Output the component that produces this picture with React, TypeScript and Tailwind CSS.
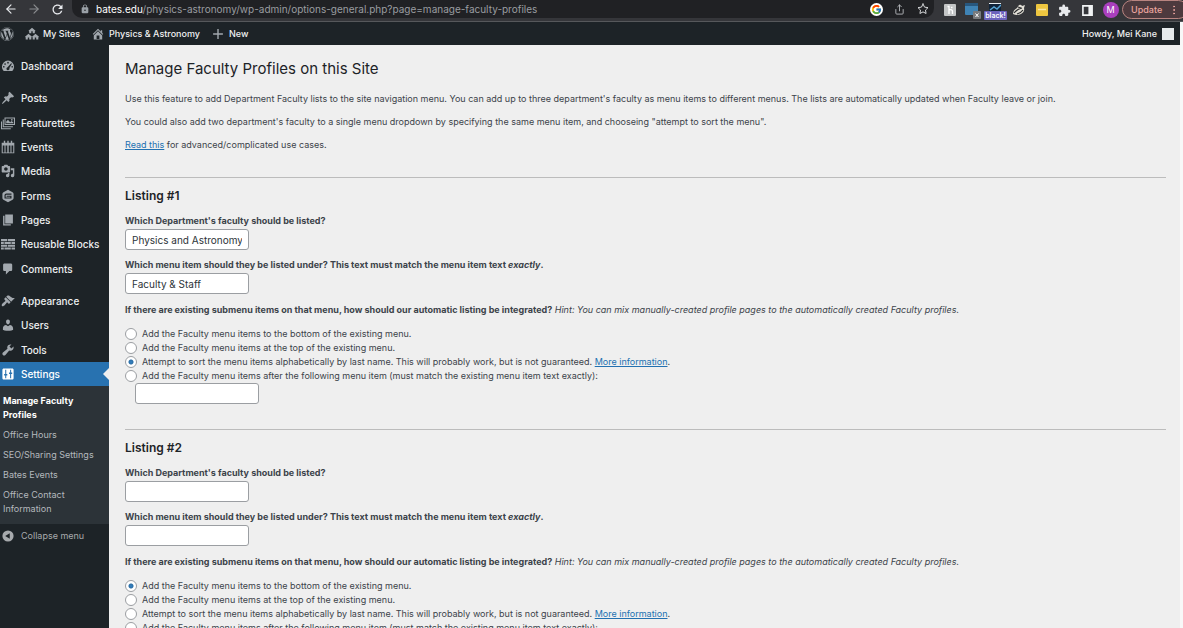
import { ReactNode } from 'react'
import {
  FiArrowLeft,
  FiArrowRight,
  FiMoreVertical,
  FiShare,
  FiStar,
} from 'react-icons/fi'
import { FcGoogle } from 'react-icons/fc'
import { FaWordpress } from 'react-icons/fa'
import { MdExtension, MdLock, MdRefresh } from 'react-icons/md'

type MenuItemType = {
  label: string
  icon: ReactNode
  active?: boolean
}

type ListingProps = {
  num: number
  department?: string
  menuItem?: string
  selected: number
}

const Icon = ({ children }: { children: ReactNode }) => (
  <svg viewBox="0 0 20 20" className="size-[14px] shrink-0" fill="currentColor" aria-hidden="true">
    {children}
  </svg>
)

const icons = {
  dashboard: (
    <Icon>
      <path
        fillRule="evenodd"
        d="M3.8 17h12.4A8.6 8.6 0 0 0 18.7 11 8.7 8.7 0 0 0 1.3 11a8.6 8.6 0 0 0 2.5 6zM10 4a1.2 1.2 0 1 1 0 2.4A1.2 1.2 0 0 1 10 4zM5.8 5.9a1.2 1.2 0 1 1 0 2.4 1.2 1.2 0 0 1 0-2.4zM14.6 6l1 .7-3.6 6.2a2.2 2.2 0 1 1-2.6-1.2zM4 9.9a1.2 1.2 0 1 1 0 2.4 1.2 1.2 0 0 1 0-2.4zm12 0a1.2 1.2 0 1 1 0 2.4 1.2 1.2 0 0 1 0-2.4z"
      />
    </Icon>
  ),
  posts: (
    <Icon>
      <path d="M10.44 3.02l1.82-1.82 6.36 6.35-1.83 1.82c-1.05-.68-2.48-.57-3.41.36l-.75.75c-.92.93-1.04 2.35-.35 3.41l-1.83 1.82-2.41-2.41-2.8 2.79c-.42.42-3.38 2.71-3.8 2.29s1.86-3.39 2.28-3.81l2.79-2.79L4.1 9.36l1.83-1.82c1.05.69 2.48.57 3.4-.36l.75-.75c.93-.92 1.05-2.35.36-3.41z" />
    </Icon>
  ),
  featurettes: (
    <Icon>
      <path fillRule="evenodd" d="M5 2h15v11H5zm1.5 1.5v8h12v-8z" />
      <path d="M7.5 10.500V8l2.500-2.500L13 9l2-2 2.500 2v1.500zM15.500 4.300a1.200 1.200 0 1 1 0 2.400 1.200 1.200 0 0 1 0-2.400z" />
      <path d="M2.500 5H4v9.500h13V16H2.500zM0 8h1.500v9.500H14V19H0z" />
    </Icon>
  ),
  events: (
    <Icon>
      <path
        fillRule="evenodd"
        d="M4 1h2v3h3V1h2v3h3V1h2v3h3v15H1V4h3zM2.500 8v10H5V8zm4 0v10H9V8zm4.500 0v10h2.500V8zm4 0v10h2.500V8z"
      />
    </Icon>
  ),
  media: (
    <Icon>
      <path
        fillRule="evenodd"
        d="M13 11V4c0-.55-.45-1-1-1h-1.670L9 1H5L3.670 3H2c-.55 0-1 .45-1 1v7c0 .55.45 1 1 1h10c.55 0 1-.45 1-1zM7 4.500c1.380 0 2.500 1.120 2.500 2.500S8.380 9.500 7 9.500 4.500 8.380 4.500 7 5.620 4.500 7 4.500zM14 6h5v10.500a2.500 2.500 0 1 1-2-2.450V9h-3zM10 13h2v3.500a2.500 2.500 0 1 1-2-2.450z"
      />
    </Icon>
  ),
  forms: (
    <Icon>
      <path
        fillRule="evenodd"
        d="M10 1l6.500 3.500Q18 5.300 18 7v6q0 1.700-1.500 2.500L10 19l-6.500-3.500Q2 14.700 2 13V7q0-1.700 1.500-2.500zM7.500 6.500Q5 6.500 5 9v4.500h10V9.500H8v1.500h5.200v1H6.700V9q0-.8.800-.8H15V6.500z"
      />
    </Icon>
  ),
  pages: (
    <Icon>
      <path d="M6 15V2h11v13H6zm-1 1h9v2H3V4h2v12z" />
    </Icon>
  ),
  blocks: (
    <Icon>
      <path d="M0 3h9v3H0zm10 0h10v3H10zM0 7h4v3H0zm5 0h9v3H5zm10 0h5v3h-5zM0 11h9v3H0zm10 0h10v3H10zM0 15h4v3H0zm5 0h9v3H5zm10 0h5v3h-5z" />
    </Icon>
  ),
  comments: (
    <Icon>
      <path d="M5 2h9c1.100 0 2 .9 2 2v7c0 1.100-.9 2-2 2h-2l-5 5v-5H5c-1.100 0-2-.9-2-2V4c0-1.100.9-2 2-2z" />
    </Icon>
  ),
  appearance: (
    <Icon>
      <path d="M14.480 11.060L7.410 3.990l1.500-1.500c.5-.56 2.300-.47 3.510.32 1.210.8 1.430 1.280 2.910 2.100 1.180.64 2.450 1.260 4.450.850zm-.71.71L6.700 4.700 4.930 6.470c-.39.39-.39 1.020 0 1.410l1.060 1.060c.39.390.39 1.030 0 1.420-.6.600-1.430 1.110-2.210 1.690-.35.26-.7.530-1.010.840C1.430 14.230.4 16.080 1.400 17.070c.99 1 2.840-.03 4.180-1.360.31-.31.580-.66.850-1.020.570-.78 1.080-1.610 1.690-2.210.39-.39 1.020-.39 1.410 0l1.060 1.060c.39.390 1.020.39 1.410 0z" />
    </Icon>
  ),
  users: (
    <Icon>
      <path d="M10 9.250c-2.270 0-2.730-3.440-2.730-3.440C7 4.020 7.820 2 9.970 2c2.160 0 2.980 2.020 2.710 3.810 0 0-.41 3.440-2.680 3.440zm0 2.570L12.720 10c2.390 0 4.520 2.330 4.520 4.530v2.490s-3.650 1.130-7.240 1.130c-3.650 0-7.240-1.130-7.240-1.130v-2.490c0-2.250 1.940-4.480 4.470-4.480z" />
    </Icon>
  ),
  tools: (
    <Icon>
      <path d="M16.680 9.770c-1.340 1.340-3.300 1.670-4.950.990l-5.410 6.520c-.99.990-2.590.990-3.580 0s-.99-2.590 0-3.570l6.520-5.420c-.68-1.650-.35-3.610.990-4.950 1.280-1.280 3.120-1.620 4.720-1.060l-2.890 2.890 2.820 2.820 2.860-2.870c.53 1.580.180 3.390-1.080 4.650z" />
    </Icon>
  ),
  settings: (
    <Icon>
      <path
        fillRule="evenodd"
        d="M18 16V4c0-1.100-.9-2-2-2H4c-1.100 0-2 .9-2 2v12c0 1.100.9 2 2 2h12c1.100 0 2-.9 2-2zM6 4h1.500v6H9v2H7.500v4H6v-4H4.500v-2H6zm7 0h1.500v4H16v2h-1.500v6H13v-6h-1.500V8H13z"
      />
    </Icon>
  ),
  collapse: (
    <Icon>
      <path
        fillRule="evenodd"
        d="M10 2a8 8 0 1 1 0 16 8 8 0 0 1 0-16zm2.500 4L6 10l6.500 4z"
      />
    </Icon>
  ),
  sites: (
    <Icon>
      <path d="M10 1l5 4.500-1 1V9h-3V6H9v3H6V6.500l-1-1zM5 9.500L10 14l-1 1v3H6v-3H4v3H1v-3l-1-1zM15 9.500l5 4.500-1 1v3h-3v-3h-2v3h-3v-3l-1-1z" />
    </Icon>
  ),
  home: (
    <Icon>
      <path d="M16 8.500l1.530 1.530-1.060 1.060L10 4.600l-6.470 6.500-1.060-1.070L10 2.500l4 4v-2h2v4zm-6-2.460l6 5.990V18H4v-5.970zM12 17v-5H8v5h4z" fillRule="evenodd" />
    </Icon>
  ),
  plus: (
    <Icon>
      <path d="M17 9v2h-6v6H9v-6H3V9h6V3h2v6z" />
    </Icon>
  ),
}

const contentMenu: MenuItemType[] = [
  { label: 'Posts', icon: icons.posts },
  { label: 'Featurettes', icon: icons.featurettes },
  { label: 'Events', icon: icons.events },
  { label: 'Media', icon: icons.media },
  { label: 'Forms', icon: icons.forms },
  { label: 'Pages', icon: icons.pages },
  { label: 'Reusable Blocks', icon: icons.blocks },
  { label: 'Comments', icon: icons.comments },
]

const adminMenu: MenuItemType[] = [
  { label: 'Appearance', icon: icons.appearance },
  { label: 'Users', icon: icons.users },
  { label: 'Tools', icon: icons.tools },
  { label: 'Settings', icon: icons.settings, active: true },
]

const submenu = ['Office Hours', 'SEO/Sharing Settings', 'Bates Events', 'Office Contact Information']

const MenuItem = ({ label, icon, active }: MenuItemType) => (
  <a
    href="#"
    className={`relative flex min-h-6 items-center gap-[6px] pl-px text-[10px] leading-4 font-medium whitespace-nowrap ${
      active ? 'bg-[#2872b0] text-white' : 'text-[#eef0f1]'
    }`}
  >
    <span className={active ? 'text-white' : 'text-[#a2a8ae]'}>{icon}</span>
    {label}
    {active && (
      <span className="absolute top-1/2 right-0 -translate-y-1/2 border-y-[6px] border-r-[6px] border-y-transparent border-r-[#efefef]" />
    )}
  </a>
)

const BrowserBar = () => (
  <div className="flex h-[22px] shrink-0 items-start overflow-hidden border-b border-[#56585b] bg-[#35363a] text-[#e8eaed]">
    <div className="flex h-[18px] w-[72px] items-center gap-[9px] pl-1">
      <button aria-label="Back">
        <FiArrowLeft size={14} />
      </button>
      <button aria-label="Forward" className="text-[#8a8c8f]">
        <FiArrowRight size={14} />
      </button>
      <button aria-label="Reload">
        <MdRefresh size={15} />
      </button>
    </div>
    <div className="flex h-[18px] flex-1 items-center rounded-b-[10px] bg-[#202124] pl-2">
      <MdLock size={10} className="text-[#9aa0a6]" />
      <p className="ml-[6px] flex-1 text-[10px] leading-4 text-[#9a9da1]">
        <span className="text-white">bates.edu</span>
        /physics-astronomy/wp-admin/options-general.php?page=manage-faculty-profiles
      </p>
      <div className="grid w-[69px] grid-cols-3 items-center justify-items-center">
        <span className="flex size-[13px] items-center justify-center rounded-full bg-white">
          <FcGoogle size={11} />
        </span>
        <FiShare size={11} className="text-[#b5b8bb]" />
        <FiStar size={12} className="text-[#d5d7d9]" />
      </div>
    </div>
    <div className="ml-1 grid h-[18px] w-[184px] grid-cols-8 items-center justify-items-center">
      <svg viewBox="0 0 12 12" className="size-3" aria-hidden="true">
        <rect width="12" height="12" rx="1" fill="#c3c5c6" />
        <path d="M3.500 2.500H5V10M5 6q3.500-1 3.500 1.500V10M7 3.500h1.500" stroke="#fff" strokeWidth="1.300" fill="none" />
      </svg>
      <svg viewBox="0 0 16 16" className="mt-0.5 size-4" aria-hidden="true">
        <rect width="13" height="12" rx="1" fill="#3f83b5" />
        <rect width="13" height="3" fill="#28577e" />
        <rect x="8" y="8" width="8" height="8" rx="1" fill="#777a7d" />
        <path d="M10.500 10.500l3 3.500m0-3.500l-3 3.500" stroke="#fff" strokeWidth="1" />
      </svg>
      <div className="mt-[3px] flex flex-col items-center">
        <svg viewBox="0 0 12 8" className="h-2 w-3" aria-hidden="true">
          <rect width="12" height="8" fill="#10233a" />
          <path d="M0 .5h12" stroke="#e8eef2" strokeWidth="1" />
          <path d="M1 7l4-3 3 2 4-4" stroke="#55a3d3" strokeWidth="1.500" fill="none" />
        </svg>
        <span className="rounded-[1px] bg-[#6c63bd] px-px text-[7px] leading-[9px] font-semibold text-white">
          black!
        </span>
      </div>
      <svg viewBox="0 0 14 14" className="size-[14px]" aria-hidden="true">
        <path d="M1 11Q1 7 5 5l2-3q2-1 3 1l3-1-1 3q1 4-3 6t-8 0z" fill="#e2dfd6" />
        <path d="M2 10q3-4 8-5M5 11q4-1 6-4M6 4l3 1" stroke="#292a2d" strokeWidth="1.200" fill="none" />
      </svg>
      <svg viewBox="0 0 12 12" className="size-3" aria-hidden="true">
        <rect width="12" height="12" rx="1" fill="#eec640" />
        <path d="M2 5.500h8" stroke="#fae7a5" strokeWidth="1.500" />
      </svg>
      <MdExtension size={13} />
      <svg viewBox="0 0 12 12" className="size-[11px]" aria-hidden="true">
        <path d="M1 1h10v10H1z" fill="none" stroke="#f1f3f4" strokeWidth="1.800" />
        <path d="M7 1h4v10H7z" fill="#f1f3f4" />
      </svg>
      <span className="flex size-4 items-center justify-center rounded-full bg-[#a93fbd] text-[9px] leading-4 text-white">
        M
      </span>
    </div>
    <button className="-mr-[5px] flex h-[19px] w-[66px] shrink-0 items-center gap-[6px] rounded-full border border-[#b88480] bg-[#4d3a3e] pl-2 text-[9px] leading-4 font-medium text-[#eba59f]">
      Update
      <FiMoreVertical size={12} />
    </button>
  </div>
)

const AdminBar = () => (
  <header className="flex h-[23px] shrink-0 items-center bg-[#1d2327] text-[9px] leading-4 font-medium text-[#f0f0f1]">
    <a href="#" aria-label="About WordPress" className="text-[#a2a8ae]">
      <FaWordpress size={14} />
    </a>
    <a href="#" className="ml-[11px] flex items-center gap-1">
      <span className="text-[#a2a8ae]">{icons.sites}</span>
      My Sites
    </a>
    <a href="#" className="ml-[11px] flex items-center gap-1">
      <span className="text-[#a2a8ae]">{icons.home}</span>
      Physics &amp; Astronomy
    </a>
    <a href="#" className="ml-[11px] flex items-center gap-1">
      <span className="text-[#a2a8ae]">{icons.plus}</span>
      New
    </a>
    <a href="#" className="mr-[6px] ml-auto flex items-center gap-[5px]">
      Howdy, Mei Kane
      <span className="size-3 bg-[#e6eaec]" />
    </a>
  </header>
)

const Sidebar = () => (
  <nav className="w-[109px] shrink-0 bg-[#1d2327] pt-[9px]">
    <MenuItem label="Dashboard" icon={icons.dashboard} />
    <div className="mt-2 grid h-[195px] auto-rows-fr">
      {contentMenu.map((item) => (
        <MenuItem key={item.label} {...item} />
      ))}
    </div>
    <div className="mt-2 grid h-[97px] auto-rows-fr">
      {adminMenu.map((item) => (
        <MenuItem key={item.label} {...item} />
      ))}
    </div>
    <ul className="bg-[#2c3338] px-[3px] py-[5px] text-[9px] leading-[14px] text-[#b4b9be]">
      <li className="py-[3px] font-bold text-white">
        <a href="#">
          Manage Faculty
          <br />
          Profiles
        </a>
      </li>
      {submenu.map((label) => (
        <li key={label} className="py-[3px]">
          <a href="#">{label}</a>
        </li>
      ))}
    </ul>
    <button className="flex h-6 items-center gap-[6px] pl-px text-[9px] leading-4 text-[#a7aaad]">
      {icons.collapse}
      Collapse menu
    </button>
  </nav>
)

const inputClass =
  'block h-[21px] w-[124px] rounded-[3px] border border-[#9b9ea2] bg-white px-[6px] text-[10px] leading-4 text-[#2c3338]'

const Listing = ({ num, department, menuItem, selected }: ListingProps) => {
  const options: ReactNode[] = [
    'Add the Faculty menu items to the bottom of the existing menu.',
    'Add the Faculty menu items at the top of the existing menu.',
    <>
      Attempt to sort the menu items alphabetically by last name. This will probably work, but is not
      guaranteed.{' '}
      <a href="#" className="text-[#2271b1] underline">
        More information
      </a>
      .
    </>,
    'Add the Faculty menu items after the following menu item (must match the existing menu item text exactly):',
  ]

  return (
    <section className="mt-6 border-t border-[#bcbcbc] pt-[10px] pb-px">
      <h2 className="text-[12px] leading-4 font-semibold text-[#1d2327]">Listing #{num}</h2>
      <label htmlFor={`department-${num}`} className="mt-[9px] block font-bold">
        Which Department's faculty should be listed?
      </label>
      <input id={`department-${num}`} type="text" defaultValue={department} className={inputClass} />
      <label htmlFor={`menu-item-${num}`} className="mt-[7px] block font-bold">
        Which menu item should they be listed under? This text must match the menu item text{' '}
        <em>exactly</em>.
      </label>
      <input id={`menu-item-${num}`} type="text" defaultValue={menuItem} className={inputClass} />
      <fieldset>
        <legend className="pt-2">
          <span className="font-bold">
            If there are existing submenu items on that menu, how should our automatic listing be
            integrated?
          </span>{' '}
          <em>
            Hint: You can mix manually-created profile pages to the automatically created Faculty
            profiles.
          </em>
        </legend>
        <div className="mt-[9px]">
          {options.map((option, index) => (
            <label key={index} className="flex h-[14px] items-center gap-[5px]">
              <input
                type="radio"
                name={`integration-${num}`}
                defaultChecked={index === selected}
                className="size-3 shrink-0 appearance-none rounded-full border border-[#9b9ea2] bg-white checked:bg-[radial-gradient(circle,#3582c4_0,#2c6fa6_2px,white_3px)]"
              />
              <span>{option}</span>
            </label>
          ))}
        </div>
        <input
          type="text"
          aria-label="Existing menu item"
          className={`${inputClass} ml-[10px]`}
        />
      </fieldset>
    </section>
  )
}

const App = () => {
  return (
    <div className="flex h-screen flex-col overflow-hidden bg-[#efefef] font-['Inter','Liberation_Sans',sans-serif]">
      <BrowserBar />
      <div className="flex min-h-0 flex-1 flex-col border-r-[3px] border-[#f8f8f8]">
        <AdminBar />
        <div className="flex min-h-0 flex-1">
          <Sidebar />
          <main className="flex-1 overflow-hidden pt-[13px] pr-[14px] pl-4 text-[9px] leading-4 text-[#3c434a]">
            <h1 className="text-[15px] leading-[22px] text-[#1d2327]">
              Manage Faculty Profiles on this Site
            </h1>
            <p className="mt-[11px]">
              Use this feature to add Department Faculty lists to the site navigation menu. You can add
              up to three department's faculty as menu items to different menus. The lists are
              automatically updated when Faculty leave or join.
            </p>
            <p className="mt-[7px]">
              You could also add two department's faculty to a single menu dropdown by specifying the
              same menu item, and chooseing "attempt to sort the menu".
            </p>
            <p className="mt-[7px]">
              <a href="#" className="text-[#2271b1] underline">
                Read this
              </a>{' '}
              for advanced/complicated use cases.
            </p>
            <Listing num={1} department="Physics and Astronomy" menuItem="Faculty & Staff" selected={2} />
            <Listing num={2} selected={0} />
          </main>
        </div>
      </div>
    </div>
  )
}

export default App
